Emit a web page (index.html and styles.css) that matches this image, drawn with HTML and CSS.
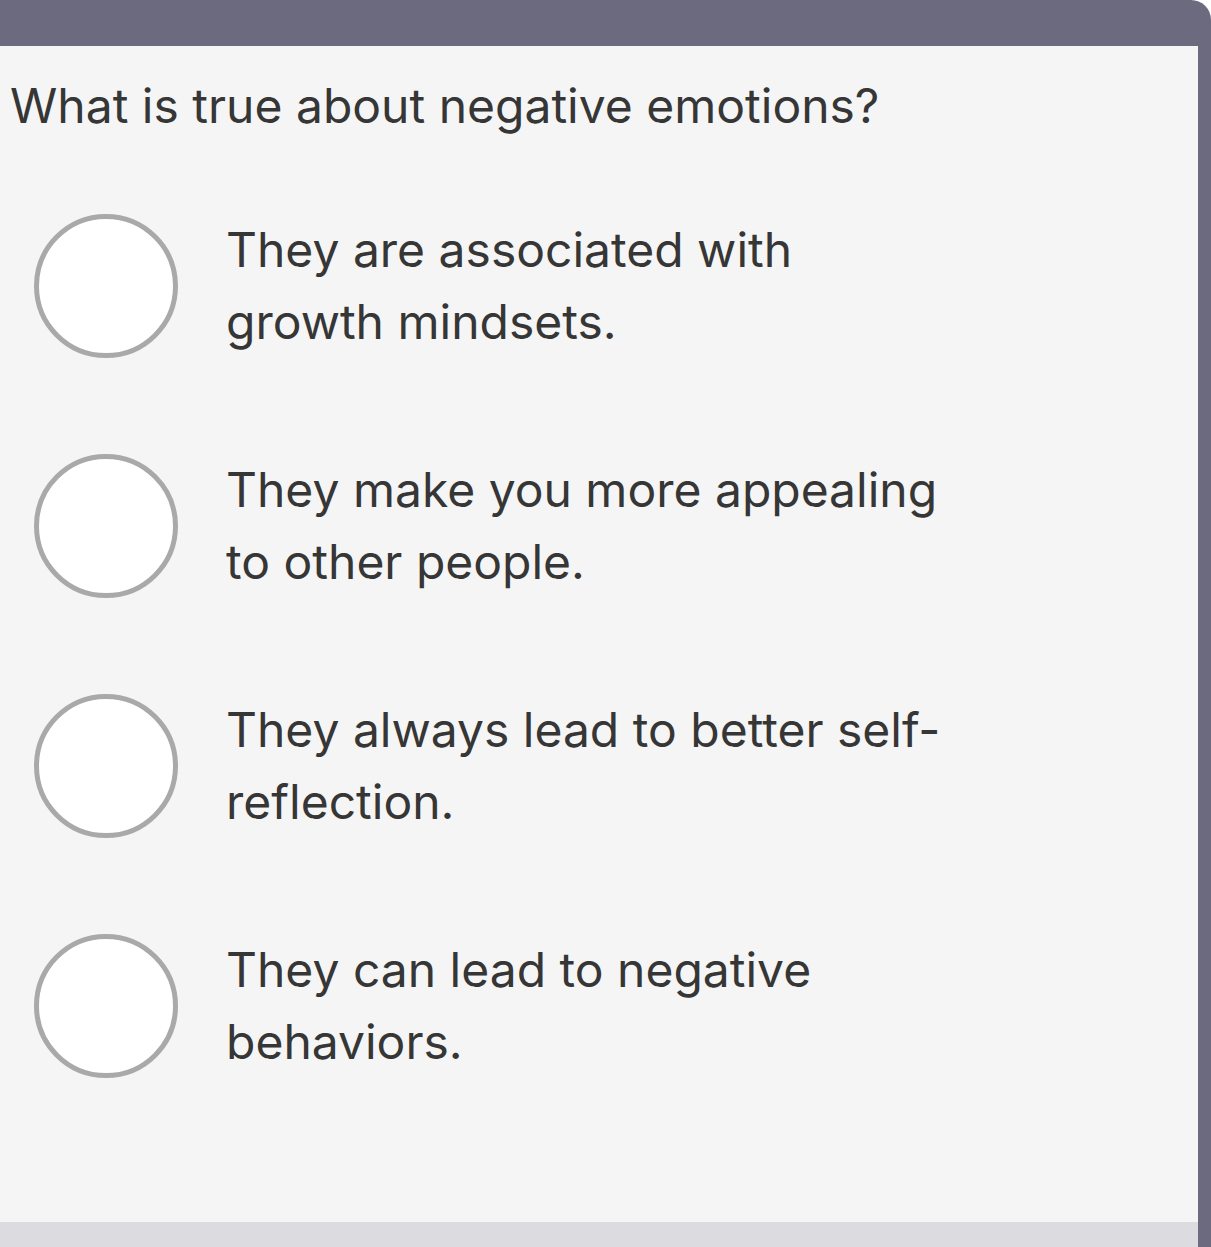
FILE: index.html
```html
<!DOCTYPE html>
<html lang="en">
<head>
  <meta charset="UTF-8" />
  <title>Quiz</title>
  <link rel="stylesheet" href="styles.css">
</head>
<body>
  <div class="marco">
    <div class="panel">
      <h2 class="pregunta">What is true about negative emotions?</h2>

      <div class="opciones">
        <!-- Opción 1 -->
        <label class="opcion">
          <span class="circulo"></span>
          <span class="texto">They are associated with growth mindsets.</span>
        </label>

        <!-- Opción 2 -->
        <label class="opcion">
          <span class="circulo"></span>
          <span class="texto">They make you more appealing to other people.</span>
        </label>

        <!-- Opción 3 -->
        <label class="opcion">
          <span class="circulo"></span>
          <span class="texto">They always lead to better self-reflection.</span>
        </label>

        <!-- Opción 4 -->
        <label class="opcion">
          <span class="circulo"></span>
          <span class="texto">They can lead to negative behaviors.</span>
        </label>
      </div>
    </div>
    <div class="pie"></div>
  </div>
</body>
</html>
```

FILE: styles.css
```css
body {
  margin: 0;
  font-family: Inter, 'Noto Sans', sans-serif;
  background: #ffffff;
}

.marco {
  background: #6b6a7e;
  border-top-right-radius: 20px;
  padding-top: 46px;
  padding-right: 13px;
  height: 1247px;
  box-sizing: border-box;
  display: flex;
  flex-direction: column;
}

.panel {
  background: #f5f5f5;
  height: 1176px;
  box-sizing: border-box;
  padding: 24px 0 0 0;
}

.pregunta {
  margin: 0 0 72px 10px;
  font-size: 48px;
  font-weight: 400;
  line-height: 72px;
  color: #363636;
}

.opciones {
  display: flex;
  flex-direction: column;
  gap: 96px;
}

.opcion {
  display: flex;
  align-items: center;
  gap: 48px;
  padding-left: 34px;
  cursor: pointer;
}

.circulo {
  flex: none;
  width: 144px;
  height: 144px;
  box-sizing: border-box;
  border: 5px solid #a9a9a9;
  border-radius: 50%;
  background: #ffffff;
}

.texto {
  max-width: 730px;
  font-size: 48px;
  line-height: 72px;
  color: #363636;
}

.pie {
  flex: 1;
  background: #dcdbe0;
}
```
